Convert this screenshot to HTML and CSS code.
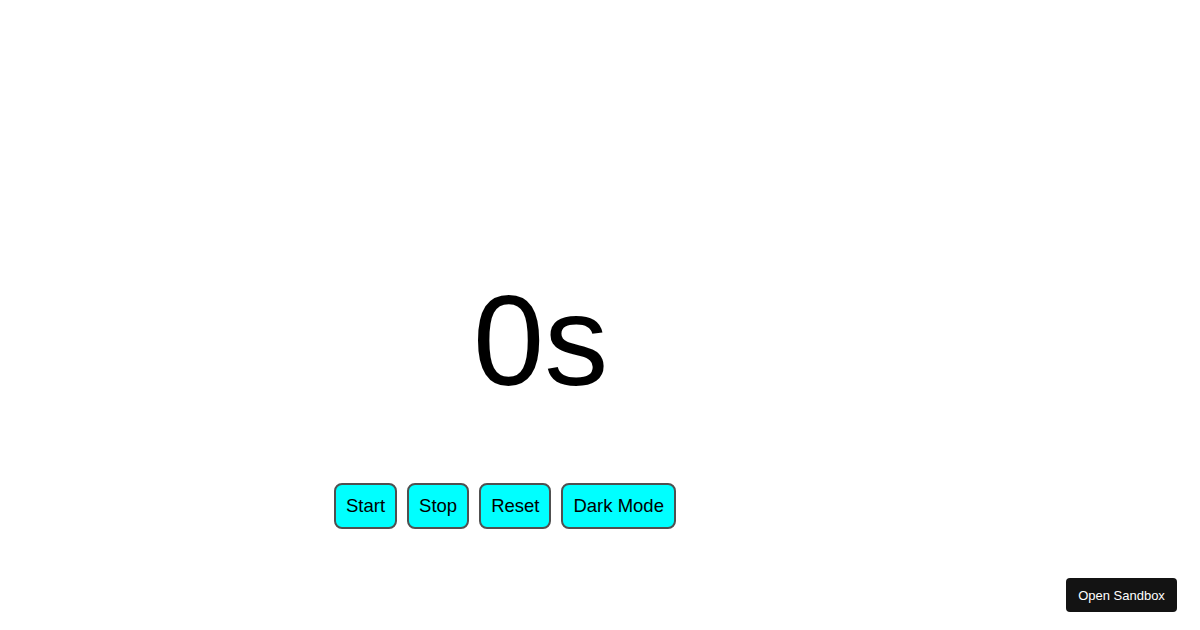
FILE: index.html
```html
<!DOCTYPE html>
<html>
<head>
<meta charset="utf-8">
<link rel="stylesheet" href="styles.css">
</head>
<body>
<div class="app">
  <div class="timer">0s</div>
  <div class="controls">
    <button class="btn">Start</button>
    <button class="btn">Stop</button>
    <button class="btn">Reset</button>
    <button class="btn">Dark Mode</button>
  </div>
</div>
<a class="sandbox">Open Sandbox</a>
</body>
</html>
```
FILE: styles.css
```css
html, body {
  margin: 0;
  padding: 0;
  background: #ffffff;
  font-family: "Liberation Sans", Arial, sans-serif;
}
.app {
  padding-top: 263px;
}
.timer {
  margin-left: 473px;
  font-size: 128px;
  line-height: 156px;
  color: #000;
}
.controls {
  margin-top: 64px;
  margin-left: 329px;
  display: flex;
}
.btn {
  margin: 0 5px;
  font-family: "Liberation Sans", Arial, sans-serif;
  font-size: 18.5px;
  padding: 10px;
  background: #00ffff;
  color: #000;
  border: 2px solid #505050;
  border-radius: 8px;
}
.sandbox {
  position: fixed;
  right: 23px;
  bottom: 18px;
  width: 111px;
  height: 34px;
  box-sizing: border-box;
  background: #131313;
  color: #fff;
  font-size: 13px;
  border-radius: 4px;
  display: flex;
  align-items: center;
  justify-content: center;
}
```
